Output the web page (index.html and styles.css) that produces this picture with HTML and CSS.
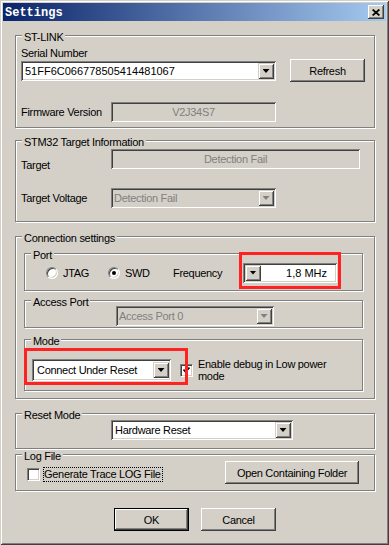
FILE: index.html
```html
<!DOCTYPE html>
<html>
<head>
<title>Settings</title>
<link rel="stylesheet" href="styles.css">
</head>
<body>
<div class="window">
<div class="titlebar">
<span class="title">Settings</span>
<span class="close-btn"><svg width="8" height="7" viewBox="0 0 8 7"><path d="M0.6 0.5 L7.4 6.5 M7.4 0.5 L0.6 6.5" stroke="#000" stroke-width="1.7" fill="none"/></svg></span>
</div>
<div class="content">

<div class="group stlink">
<div class="legend">ST-LINK</div>
<div class="gbody">
<div class="serial-label">Serial Number</div>
<div class="serial-row">
<div class="combo serial-combo"><span class="combo-text value">51FF6C066778505414481067</span><span class="drop"><i class="arrow"></i></span></div>
<button class="btn refresh-btn">Refresh</button>
</div>
<div class="fw-row">
<span class="row-label">Firmware Version</span>
<div class="field fw-field">V2J34S7</div>
</div>
</div>
</div>

<div class="group target">
<div class="legend">STM32 Target Information</div>
<div class="gbody">
<div class="target-row">
<span class="row-label target-label">Target</span>
<div class="field target-field">Detection Fail</div>
</div>
<div class="voltage-row">
<span class="row-label">Target Voltage</span>
<div class="combo disabled voltage-combo"><span class="combo-text">Detection Fail</span><span class="drop"><i class="arrow"></i></span></div>
</div>
</div>
</div>

<div class="group connection">
<div class="legend">Connection settings</div>
<div class="gbody">

<div class="group sub port">
<div class="legend">Port</div>
<div class="port-row">
<span class="option jtag"><span class="radio"></span>JTAG</span>
<span class="option swd"><span class="radio checked"></span>SWD</span>
<span class="freq-label">Frequency</span>
<div class="combo freq-combo"><span class="drop"><i class="arrow"></i></span><span class="combo-text value">1,8 MHz</span></div>
</div>
<div class="marker freq-marker"></div>
</div>

<div class="group sub access">
<div class="legend">Access Port</div>
<div class="combo disabled access-combo"><span class="combo-text">Access Port 0</span><span class="drop"><i class="arrow"></i></span></div>
</div>

<div class="group sub mode">
<div class="legend">Mode</div>
<div class="mode-row">
<div class="combo mode-combo"><span class="combo-text">Connect Under Reset</span><span class="drop"><i class="arrow"></i></span></div>
<span class="checkbox checked"><svg width="7" height="7" viewBox="0 0 7 7"><path d="M0.5 2.5 L2.5 4.8 L6.5 0.5" stroke="#000" stroke-width="1.6" fill="none"/></svg></span>
<span class="mode-text">Enable debug in Low power mode</span>
</div>
<div class="marker mode-marker"></div>
</div>

</div>
</div>

<div class="group reset">
<div class="legend">Reset Mode</div>
<div class="gbody">
<div class="combo reset-combo"><span class="combo-text">Hardware Reset</span><span class="drop"><i class="arrow"></i></span></div>
</div>
</div>

<div class="group log">
<div class="legend">Log File</div>
<div class="log-row">
<span class="checkbox"></span>
<span class="log-text">Generate Trace LOG File</span>
<button class="btn folder-btn">Open Containing Folder</button>
</div>
</div>

<div class="actions">
<button class="btn default-btn">OK</button>
<button class="btn">Cancel</button>
</div>

</div>
</div>
</body>
</html>
```

FILE: styles.css
```css
body {
    margin: 0;
    padding: 0;
    font-family: "Liberation Sans", Arial, sans-serif;
    font-size: 11px;
    letter-spacing: -0.3px;
    color: #000;
    background-color: #d4d0c8;
}

.window {
    width: 389px;
    height: 545px;
    box-sizing: border-box;
    padding: 3px;
    background-color: #d4d0c8;
    box-shadow: inset 1px 1px #d4d0c8, inset -1px -1px #404040, inset 2px 2px #fff, inset -2px -2px #808080;
}

.titlebar {
    height: 18px;
    display: flex;
    align-items: center;
    justify-content: space-between;
    padding: 0 2px 0 2px;
    background: linear-gradient(to right, #0a246a, #a6caf0);
}

.title {
    font-family: "Liberation Mono", "DejaVu Sans Mono", monospace;
    font-weight: bold;
    font-size: 12px;
    letter-spacing: 0;
    color: #fff;
    padding-top: 1px;
}

.close-btn {
    width: 16px;
    height: 14px;
    display: flex;
    align-items: center;
    justify-content: center;
    background-color: #d4d0c8;
    box-shadow: inset -1px -1px #404040, inset 1px 1px #fff, inset -2px -2px #808080, inset 2px 2px #d4d0c8;
}

.content {
    padding: 14px 11px 0 12px;
}

/* group boxes */
.group {
    position: relative;
    box-sizing: border-box;
    border: 1px solid #808080;
    box-shadow: 1px 1px 0 #fff, inset 1px 1px 0 #fff;
}

.legend {
    width: fit-content;
    margin: -5px 0 0 6px;
    padding: 0 2px;
    line-height: 13px;
    background-color: #d4d0c8;
}

.gbody {
    padding: 0 5px;
}

.stlink { height: 93px; }
.target { height: 82px; margin-top: 12px; }
.connection { height: 163px; margin-top: 14px; }
.reset { height: 36px; margin-top: 14px; }
.log { height: 37px; margin-top: 5px; }

.connection .gbody {
    padding: 0 0 0 8px;
}

.sub {
    width: 339px;
}

.port { height: 38px; margin-top: 8px; }
.access { height: 28px; margin-top: 9px; }
.mode { height: 52px; margin-top: 11px; }

/* controls */
.combo {
    display: flex;
    box-sizing: border-box;
    height: 20px;
    padding: 2px;
    background-color: #fff;
    box-shadow: inset 1px 1px #808080, inset -1px -1px #fff, inset 2px 2px #404040, inset -2px -2px #d4d0c8;
}

.combo-text {
    flex: 1;
    padding-left: 2px;
    line-height: 16px;
    white-space: nowrap;
    overflow: hidden;
}

.value {
    letter-spacing: 0;
}

.drop {
    width: 16px;
    display: flex;
    align-items: center;
    justify-content: center;
    background-color: #d4d0c8;
    box-shadow: inset 1px 1px #d4d0c8, inset -1px -1px #404040, inset 2px 2px #fff, inset -2px -2px #808080;
}

.arrow {
    width: 7px;
    height: 4px;
    background-color: #000;
    clip-path: polygon(0 0, 100% 0, 50% 100%);
}

.combo.disabled {
    background-color: #d4d0c8;
    color: #808080;
}

.combo.disabled .combo-text {
    padding-left: 1px;
}

.combo.disabled .arrow {
    background-color: #808080;
}

.field {
    box-sizing: border-box;
    height: 20px;
    display: flex;
    align-items: center;
    justify-content: center;
    color: #808080;
    background-color: #d4d0c8;
    box-shadow: inset 1px 1px #808080, inset -1px -1px #fff, inset 2px 2px #404040, inset -2px -2px #d4d0c8;
}

.btn {
    box-sizing: border-box;
    height: 23px;
    width: 75px;
    padding: 0;
    border: none;
    font: inherit;
    letter-spacing: inherit;
    color: #000;
    background-color: #d4d0c8;
    box-shadow: inset -1px -1px #404040, inset 1px 1px #fff, inset -2px -2px #808080, inset 2px 2px #d4d0c8;
}

.default-btn {
    border: 1px solid #000;
}

.radio {
    display: inline-block;
    box-sizing: border-box;
    width: 12px;
    height: 12px;
    margin-right: 5px;
    border-radius: 50%;
    border: 1px solid;
    border-color: #808080 #fff #fff #808080;
    background-color: #fff;
    box-shadow: inset 1px 1px #404040, inset -1px -1px #d4d0c8;
    position: relative;
}

.radio.checked::after {
    content: "";
    position: absolute;
    left: 3px;
    top: 3px;
    width: 4px;
    height: 4px;
    border-radius: 50%;
    background-color: #000;
}

.checkbox {
    box-sizing: border-box;
    width: 13px;
    height: 13px;
    display: flex;
    align-items: center;
    justify-content: center;
    border: 1px solid;
    border-color: #808080 #fff #fff #808080;
    background-color: #fff;
    box-shadow: inset 1px 1px #404040, inset -1px -1px #d4d0c8;
}

/* ST-LINK */
.serial-label {
    margin-top: 3px;
    line-height: 13px;
}

.serial-row {
    display: flex;
    align-items: flex-start;
    margin-top: -1px;
}

.serial-combo {
    width: 255px;
    margin-top: 2px;
}

.refresh-btn {
    margin-left: 14px;
}

.fw-row {
    display: flex;
    align-items: center;
    margin-top: 20px;
}

.row-label {
    width: 90px;
    line-height: 13px;
}

.fw-field {
    width: 165px;
}

/* target */
.target-row {
    display: flex;
    align-items: flex-start;
}

.target-label {
    margin-top: 10px;
}

.target-field {
    width: 249px;
}

.voltage-row {
    display: flex;
    align-items: center;
    margin-top: 16px;
}

.voltage-combo {
    width: 165px;
}

/* port */
.port-row {
    display: flex;
    align-items: center;
    height: 21px;
}

.option {
    display: flex;
    align-items: center;
}

.jtag {
    width: 62px;
    margin-left: 21px;
}

.swd {
    width: 65px;
}

.freq-label {
    width: 70px;
}

.freq-combo {
    width: 94px;
}

.freq-combo .combo-text {
    text-align: right;
    padding-right: 8px;
}

.marker {
    position: absolute;
    box-sizing: border-box;
    border: 3px solid #f22;
}

.freq-marker {
    left: 214px;
    top: -2px;
    width: 102px;
    height: 37px;
}

.access-combo {
    width: 158px;
    margin: -3px 0 0 91px;
}

.mode-row {
    display: flex;
    align-items: center;
    margin-top: 10px;
}

.mode-combo {
    width: 139px;
    height: 22px;
    margin-left: 7px;
    padding: 3px 2px;
}

.mode-combo .combo-text {
    padding-left: 3px;
}

.mode .checkbox {
    margin-left: 9px;
}

.mode-text {
    width: 150px;
    margin-left: 5px;
    line-height: 12px;
}

.mode-marker {
    left: -1px;
    top: 8px;
    width: 164px;
    height: 37px;
}

/* reset & log */
.reset-combo {
    width: 182px;
    margin: -2px 0 0 90px;
}

.log-row {
    display: flex;
    align-items: flex-start;
    margin-top: -2px;
}

.log .checkbox {
    margin: 7px 0 0 11px;
}

.log-text {
    margin: 6px 0 0 3px;
    padding-right: 1px;
    line-height: 13px;
    border: 1px dotted #000;
}

.folder-btn {
    width: 134px;
    margin: 0 15px 0 auto;
}

.actions {
    display: flex;
    justify-content: center;
    gap: 12px;
    margin-top: 17px;
}
```
